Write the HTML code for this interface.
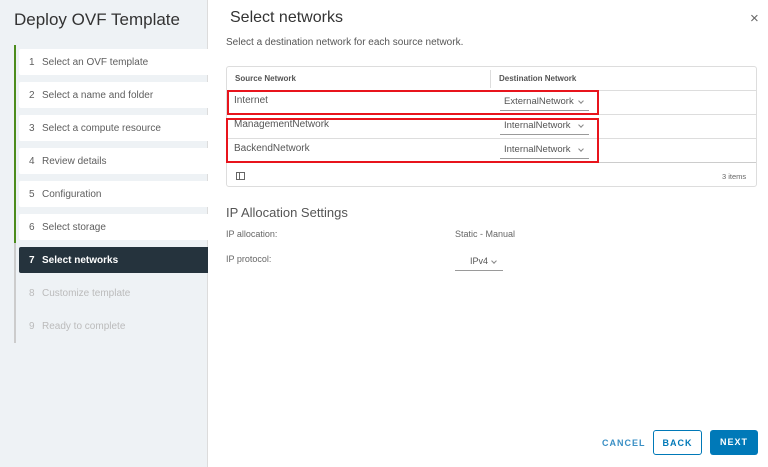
<!DOCTYPE html>
<html><head><style>
*{margin:0;padding:0;box-sizing:border-box}
body{width:768px;height:467px;overflow:hidden;background:#fff;font-family:"Liberation Sans",sans-serif;position:relative;color:#565656}
.side{position:absolute;left:0;top:0;width:208px;height:467px;background:#eef2f5;border-right:1px solid #dcdcdc}
.side h1{position:absolute;left:14px;top:10px;font-size:17px;font-weight:normal;color:#333}
.bar{position:absolute;left:14px;width:2px}
.step{position:absolute;left:19px;width:189px;height:26px;background:#fff;font-size:10px;line-height:28px;padding-left:10px;color:#5e5e5e;border-radius:2px 0 0 2px}
.step span{display:inline-block;width:13px}
.step.act{background:#25333d;color:#fff;font-weight:bold}
.step.dis{background:transparent;color:#bbb}
.abs{position:absolute}
.dd{position:absolute;font-size:9.5px;color:#555;border-bottom:1px solid #9a9a9a;height:17px;line-height:15px;padding-left:4px}
.arr{position:absolute;width:4px;height:4px;border-right:1px solid #888;border-bottom:1px solid #888;transform:rotate(45deg)}
.red{position:absolute;border:2px solid #e8141c}
</style></head><body>
<div class="side">
<h1>Deploy OVF Template</h1>
<div class="bar" style="top:45px;height:198px;background:#4c8c1c"></div>
<div class="bar" style="top:243px;height:100px;background:#ccc"></div>
<div class="step" style="top:49px"><span>1</span>Select an OVF template</div>
<div class="step" style="top:82px"><span>2</span>Select a name and folder</div>
<div class="step" style="top:115px"><span>3</span>Select a compute resource</div>
<div class="step" style="top:148px"><span>4</span>Review details</div>
<div class="step" style="top:181px"><span>5</span>Configuration</div>
<div class="step" style="top:214px"><span>6</span>Select storage</div>
<div class="step act" style="top:247px"><span>7</span>Select networks</div>
<div class="step dis" style="top:280px"><span>8</span>Customize template</div>
<div class="step dis" style="top:313px"><span>9</span>Ready to complete</div>
</div>
<div class="abs" style="left:230px;top:9px;font-size:16px;color:#333">Select networks</div>
<div class="abs" style="left:750px;top:10px;font-size:15px;color:#666">×</div>
<div class="abs" style="left:226px;top:37px;font-size:10px;color:#555">Select a destination network for each source network.</div>
<div class="abs" style="left:226px;top:66px;width:531px;height:121px;border:1px solid #ddd;border-radius:3px"></div>
<div class="abs" style="left:235px;top:74px;font-size:8px;font-weight:bold;color:#555">Source Network</div>
<div class="abs" style="left:490px;top:70px;width:1px;height:18px;background:#ddd"></div>
<div class="abs" style="left:499px;top:74px;font-size:8px;font-weight:bold;color:#555">Destination Network</div>
<div class="abs" style="left:227px;top:90px;width:529px;height:1px;background:#ddd"></div>
<div class="abs" style="left:227px;top:114px;width:529px;height:1px;background:#ddd"></div>
<div class="abs" style="left:227px;top:138px;width:529px;height:1px;background:#ddd"></div>
<div class="abs" style="left:227px;top:162px;width:529px;height:1px;background:#ccc"></div>
<div class="abs" style="left:234px;top:95px;font-size:10px">Internet</div>
<div class="abs" style="left:234px;top:119px;font-size:10px">ManagementNetwork</div>
<div class="abs" style="left:234px;top:143px;font-size:10px">BackendNetwork</div>
<div class="dd" style="left:500px;top:94px;width:89px">ExternalNetwork</div>
<div class="dd" style="left:500px;top:118px;width:89px">InternalNetwork</div>
<div class="dd" style="left:500px;top:142px;width:89px">InternalNetwork</div>
<div class="arr" style="left:579px;top:99px"></div>
<div class="arr" style="left:579px;top:123px"></div>
<div class="arr" style="left:579px;top:147px"></div>
<div class="red" style="left:227px;top:90px;width:372px;height:25px"></div>
<div class="red" style="left:226px;top:118px;width:373px;height:45px"></div>
<div class="abs" style="left:236px;top:172px;width:9px;height:8px;border:1px solid #666"></div>
<div class="abs" style="left:239px;top:172px;width:1px;height:8px;background:#666"></div>
<div class="abs" style="left:722px;top:172px;font-size:7.5px;color:#666">3 items</div>
<div class="abs" style="left:226px;top:205px;font-size:13px;color:#555">IP Allocation Settings</div>
<div class="abs" style="left:226px;top:229px;font-size:9px;color:#666">IP allocation:</div>
<div class="abs" style="left:455px;top:229px;font-size:9px;color:#666">Static - Manual</div>
<div class="abs" style="left:226px;top:254px;font-size:9px;color:#666">IP protocol:</div>
<div class="dd" style="left:455px;top:254px;width:48px;font-size:9px;padding-left:15px">IPv4</div>
<div class="arr" style="left:492px;top:259px"></div>
<div class="abs" style="left:602px;top:438px;font-size:9px;font-weight:bold;letter-spacing:1px;color:#3a8fc4">CANCEL</div>
<div class="abs" style="left:653px;top:430px;width:49px;height:25px;border:1px solid #0079b8;border-radius:3px;font-size:9px;font-weight:bold;letter-spacing:1px;color:#0079b8;text-align:center;line-height:25px">BACK</div>
<div class="abs" style="left:710px;top:430px;width:48px;height:25px;background:#0079b8;border-radius:3px;font-size:9px;font-weight:bold;letter-spacing:1px;color:#fff;text-align:center;line-height:25px">NEXT</div>
</body></html>
